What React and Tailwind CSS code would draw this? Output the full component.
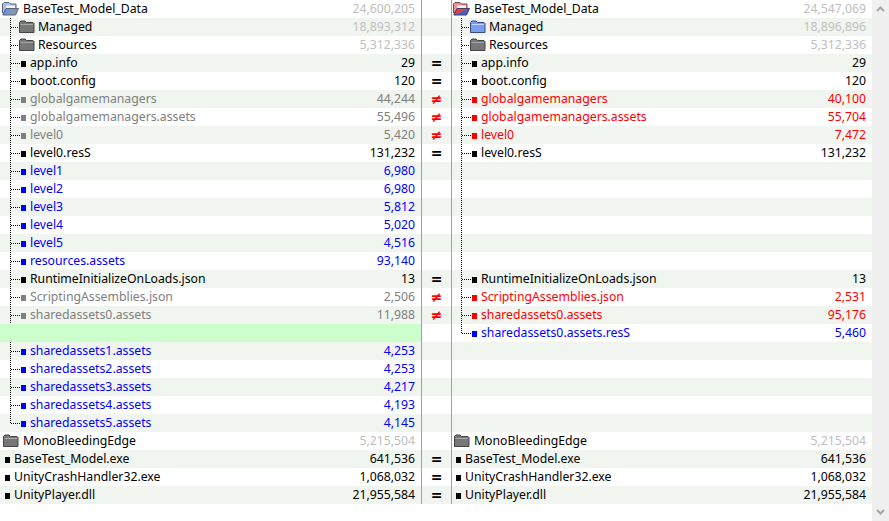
const rows = [
  { l: { n: 'BaseTest_Model_Data', s: '24,600,205', k: 'open' }, r: { n: 'BaseTest_Model_Data', s: '24,547,069', k: 'openRed' } },
  { l: { n: 'Managed', s: '18,893,312', k: 'folder', t: 1 }, r: { n: 'Managed', s: '18,896,896', k: 'blueFolder', t: 1 } },
  { l: { n: 'Resources', s: '5,312,336', k: 'folder', t: 1 }, r: { n: 'Resources', s: '5,312,336', k: 'folder', t: 1 } },
  { l: { n: 'app.info', s: '29', t: 1 }, r: { n: 'app.info', s: '29', t: 1 }, m: '=' },
  { l: { n: 'boot.config', s: '120', t: 1 }, r: { n: 'boot.config', s: '120', t: 1 }, m: '=' },
  { l: { n: 'globalgamemanagers', s: '44,244', t: 1, c: 'old' }, r: { n: 'globalgamemanagers', s: '40,100', t: 1, c: 'new' }, m: '≠' },
  { l: { n: 'globalgamemanagers.assets', s: '55,496', t: 1, c: 'old' }, r: { n: 'globalgamemanagers.assets', s: '55,704', t: 1, c: 'new' }, m: '≠' },
  { l: { n: 'level0', s: '5,420', t: 1, c: 'old' }, r: { n: 'level0', s: '7,472', t: 1, c: 'new' }, m: '≠' },
  { l: { n: 'level0.resS', s: '131,232', t: 1 }, r: { n: 'level0.resS', s: '131,232', t: 1 }, m: '=' },
  { l: { n: 'level1', s: '6,980', t: 1, c: 'only' } },
  { l: { n: 'level2', s: '6,980', t: 1, c: 'only' } },
  { l: { n: 'level3', s: '5,812', t: 1, c: 'only' } },
  { l: { n: 'level4', s: '5,020', t: 1, c: 'only' } },
  { l: { n: 'level5', s: '4,516', t: 1, c: 'only' } },
  { l: { n: 'resources.assets', s: '93,140', t: 1, c: 'only' } },
  { l: { n: 'RuntimeInitializeOnLoads.json', s: '13', t: 1 }, r: { n: 'RuntimeInitializeOnLoads.json', s: '13', t: 1 }, m: '=' },
  { l: { n: 'ScriptingAssemblies.json', s: '2,506', t: 1, c: 'old' }, r: { n: 'ScriptingAssemblies.json', s: '2,531', t: 1, c: 'new' }, m: '≠' },
  { l: { n: 'sharedassets0.assets', s: '11,988', t: 1, c: 'old' }, r: { n: 'sharedassets0.assets', s: '95,176', t: 1, c: 'new' }, m: '≠' },
  { r: { n: 'sharedassets0.assets.resS', s: '5,460', t: 1, c: 'only', last: 1 }, hl: 1 },
  { l: { n: 'sharedassets1.assets', s: '4,253', t: 1, c: 'only' } },
  { l: { n: 'sharedassets2.assets', s: '4,253', t: 1, c: 'only' } },
  { l: { n: 'sharedassets3.assets', s: '4,217', t: 1, c: 'only' } },
  { l: { n: 'sharedassets4.assets', s: '4,193', t: 1, c: 'only' } },
  { l: { n: 'sharedassets5.assets', s: '4,145', t: 1, c: 'only', last: 1 } },
  { l: { n: 'MonoBleedingEdge', s: '5,215,504', k: 'folder' }, r: { n: 'MonoBleedingEdge', s: '5,215,504', k: 'folder' } },
  { l: { n: 'BaseTest_Model.exe', s: '641,536' }, r: { n: 'BaseTest_Model.exe', s: '641,536' }, m: '=' },
  { l: { n: 'UnityCrashHandler32.exe', s: '1,068,032' }, r: { n: 'UnityCrashHandler32.exe', s: '1,068,032' }, m: '=' },
  { l: { n: 'UnityPlayer.dll', s: '21,955,584' }, r: { n: 'UnityPlayer.dll', s: '21,955,584' }, m: '=' },
]

const textColor = { old: 'text-[#808080]', new: 'text-[#ff0000]', only: 'text-[#0000ff]' }
const squareColor = { old: 'bg-[#808080]', new: 'bg-[#ff0000]', only: 'bg-[#0000ff]' }

function FolderIcon({ kind }) {
  if (kind === 'open' || kind === 'openRed') {
    const red = kind === 'openRed'
    return (
      <svg width="17" height="14" viewBox="0 0 17 14" className="shrink-0">
        <defs>
          <linearGradient id={kind} x1="0" y1="0" x2="1" y2="1">
            <stop offset="0.45" stopColor={red ? '#e0404c' : '#6f93d8'} />
            <stop offset="0.55" stopColor={red ? '#3f62c4' : '#8d97a8'} />
          </linearGradient>
        </defs>
        <path d="M0.5 11 V2 L2 0.5 H7 L8.5 2 H14 V11 Z" fill={red ? '#ee8f98' : '#a9bfe6'} stroke={red ? '#7a4450' : '#56647e'} />
        <path d="M4 3.5 H13 V6 H4 Z" fill="#f4f4f4" />
        <path d="M0.8 13 L4 6.5 H16.5 L13.5 13 Z" fill={`url(#${kind})`} stroke={red ? '#4a3a60' : '#56647e'} />
      </svg>
    )
  }
  const blue = kind === 'blueFolder'
  return (
    <svg width="16" height="14" viewBox="0 0 16 14" className="shrink-0">
      <path d="M0.5 12.5 V2.5 L2 1 H6 L7.5 2.5 H14 L15 3.5 V12.5 Z" fill={blue ? '#7c9cf0' : '#777777'} stroke={blue ? '#3a4a80' : '#444444'} />
      <path d="M1.5 4.5 H14" stroke={blue ? '#c4d4ff' : '#a8a8a8'} />
    </svg>
  )
}

function TreeGuide({ last, stub }) {
  return (
    <svg width="20" height="18" className="absolute left-0 top-0">
      <path d={last ? 'M10.5 0 V9' : 'M10.5 0 V18'} stroke="#000" strokeDasharray="1 1" fill="none" />
      {stub ? <path d="M11 9.5 H20" stroke="#000" strokeDasharray="1 1" fill="none" /> : null}
    </svg>
  )
}

function Pane({ item, bg, through, right }) {
  const tree = item?.t
  const isRoot = item?.k === 'open' || item?.k === 'openRed'
  let pad = ''
  if (item) {
    if (isRoot) pad = 'pl-[2px]'
    else if (item.k) pad = tree ? 'pl-[19px]' : 'pl-[3px]'
    else pad = tree ? 'pl-[21px]' : 'pl-[5px]'
  }
  return (
    <div className={`flex h-[18px] min-w-0 pr-[6px] ${right ? 'w-[420px]' : 'w-[421px]'} ${bg}`}>
      <div className={`relative flex h-full min-w-0 flex-1 items-center ${right ? '-ml-px' : ''}`}>
        {tree ? <TreeGuide last={item.last} stub /> : null}
        {through ? <TreeGuide /> : null}
        {item ? (
          <>
            <div className={`relative flex min-w-0 flex-1 items-center ${pad}`}>
              {item.k ? (
                <FolderIcon kind={item.k} />
              ) : (
                <span className={`mt-[1px] h-[6px] w-[5px] shrink-0 ${squareColor[item.c] || 'bg-black'}`} />
              )}
              <span className={`mb-[2px] whitespace-nowrap ${item.k ? (tree ? 'ml-[3px]' : 'ml-[4px]') : 'ml-[4px]'} ${textColor[item.c] || 'text-black'}`}>
                {item.n}
              </span>
            </div>
            <span className={`mb-[2px] ${item.k ? 'text-[#c0c0c0]' : textColor[item.c] || 'text-black'}`}>{item.s}</span>
          </>
        ) : null}
      </div>
    </div>
  )
}

export default function App() {
  return (
    <div className="flex h-[521px] w-[889px] overflow-hidden bg-white font-['Noto_Sans',sans-serif] text-[12.25px] leading-[17px]">
      <div className="flex w-[872px] flex-col self-start">
        {rows.map((row, i) => {
          const bg = i % 2 ? 'bg-[#f0f5ef]' : 'bg-white'
          return (
            <div key={i} className="flex h-[18px]">
              <Pane item={row.l} bg={row.hl ? 'bg-[#ccffcc]' : bg} />
              <div className={`flex h-[18px] w-[31px] shrink-0 items-center justify-center border-x border-[#a0a0a0] font-['DejaVu_Sans',sans-serif] text-[14px] font-bold ${bg} ${row.m === '≠' ? 'text-[#ff0000]' : 'text-black'}`}>
                {row.m}
              </div>
              <Pane item={row.r} bg={bg} through={!row.r && i < 18} right />
            </div>
          )
        })}
      </div>
      <div className="flex w-[17px] shrink-0 flex-col items-center justify-between bg-[#f0f0f0] py-[6px] text-[#a6a6a6]">
        <svg width="9" height="6" viewBox="0 0 9 6"><path d="M1 5 L4.5 1.5 L8 5" fill="none" stroke="currentColor" strokeWidth="2" /></svg>
        <svg width="9" height="6" viewBox="0 0 9 6"><path d="M1 1 L4.5 4.5 L8 1" fill="none" stroke="currentColor" strokeWidth="2" /></svg>
      </div>
    </div>
  )
}
